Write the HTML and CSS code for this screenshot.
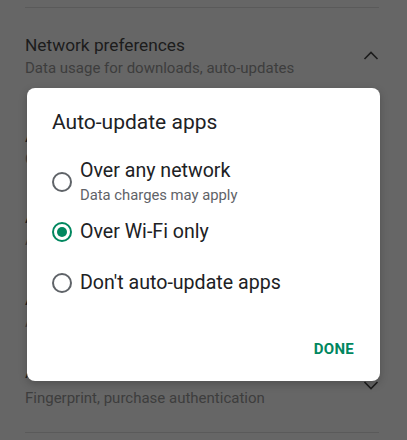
FILE: index.html
```html
<!DOCTYPE html>
<html>
<head>
<meta charset="utf-8">
<link rel="stylesheet" href="styles.css">
</head>
<body>
<div class="page">
  <div class="divider top"></div>
  <div class="item head">
    <div class="texts">
      <div class="title">Network preferences</div>
      <div class="sub">Data usage for downloads, auto-updates</div>
    </div>
    <svg class="chev" width="16" height="10" viewBox="0 0 16 10"><path d="M1.5 8 L8 1.5 L14.5 8" fill="none" stroke="#1c1c1c" stroke-width="1.6"/></svg>
  </div>
  <div class="item sub1">
    <div class="title">App download preference</div>
    <div class="sub">Over any network</div>
  </div>
  <div class="item sub2">
    <div class="title">Auto-update apps</div>
    <div class="sub">Auto-update apps over Wi-Fi only</div>
  </div>
  <div class="item sub3">
    <div class="title">Auto-play videos</div>
    <div class="sub">Auto-play videos over Wi-Fi only</div>
  </div>
  <div class="item auth">
    <div class="texts">
      <div class="title">Authentication</div>
      <div class="sub">Fingerprint, purchase authentication</div>
    </div>
    <svg class="chev" width="16" height="10" viewBox="0 0 16 10"><path d="M1.5 2 L8 8.5 L14.5 2" fill="none" stroke="#1c1c1c" stroke-width="1.6"/></svg>
  </div>
  <div class="divider bottom"></div>

  <div class="dialog">
    <div class="dtitle">Auto-update apps</div>
    <div class="options">
      <div class="opt first">
        <span class="radio"></span>
        <div class="otexts">
          <div class="olabel">Over any network</div>
          <div class="osub">Data charges may apply</div>
        </div>
      </div>
      <div class="opt">
        <span class="radio on"></span>
        <div class="olabel">Over Wi-Fi only</div>
      </div>
      <div class="opt">
        <span class="radio"></span>
        <div class="olabel">Don't auto-update apps</div>
      </div>
    </div>
    <div class="actions">
      <span class="done">DONE</span>
    </div>
  </div>
</div>
</body>
</html>
```

FILE: styles.css
```css
* { box-sizing: border-box; }
html, body { margin: 0; padding: 0; }
body {
  width: 407px;
  height: 440px;
  overflow: hidden;
  background: #666666;
  font-family: Roboto, "Noto Sans", sans-serif;
}
.page {
  position: relative;
  height: 440px;
  padding: 7px 28px 0 25px;
}
.divider { height: 1px; background: #5a5a5a; }
.item { display: flex; flex-direction: column; }
.item.head, .item.auth {
  flex-direction: row;
  align-items: center;
  justify-content: space-between;
}
.title { font-size: 17.3px; line-height: 24px; color: #1c1c1c; white-space: nowrap; }
.sub { font-size: 15px; line-height: 22px; color: #3d3d3d; white-space: nowrap; }
.item.head { margin-top: 25px; }
.item.sub1 { margin-top: 45px; }
.item.sub2 { margin-top: 35px; }
.item.sub3 { margin-top: 36px; }
.item.auth { margin-top: 27px; }
.item.auth .sub { margin-top: 3px; }
.divider.bottom { margin-top: 23px; }

.dialog {
  position: absolute;
  left: 27px;
  top: 88px;
  width: 353px;
  height: 293px;
  background: #ffffff;
  border-radius: 8px;
  box-shadow: 0 3px 8px rgba(0,0,0,0.22);
  padding: 20px 25px 0 25px;
  display: flex;
  flex-direction: column;
}
.dtitle {
  font-size: 21px;
  line-height: 28px;
  color: #202124;
  font-weight: 400;
}
.options { margin-top: 22px; display: flex; flex-direction: column; }
.opt {
  display: flex;
  align-items: center;
  gap: 8px;
  min-height: 51px;
}
.opt.first { min-height: 48px; }
.radio {
  width: 20px;
  height: 20px;
  flex: none;
  border-radius: 50%;
  border: 2px solid #5f6368;
  display: flex;
  align-items: center;
  justify-content: center;
}
.radio.on { border-color: #01875f; }
.radio.on::after {
  content: "";
  width: 10px;
  height: 10px;
  border-radius: 50%;
  background: #01875f;
}
.olabel { font-size: 19.6px; line-height: 26px; color: #202124; }
.osub { font-size: 14.8px; line-height: 22px; color: #5f6368; }
.actions {
  margin-top: 31px;
  display: flex;
  justify-content: flex-end;
}
.done {
  font-size: 15px;
  line-height: 20px;
  font-weight: 700;
  color: #01875f;
  letter-spacing: 0.3px;
  margin-right: 1px;
}
```
